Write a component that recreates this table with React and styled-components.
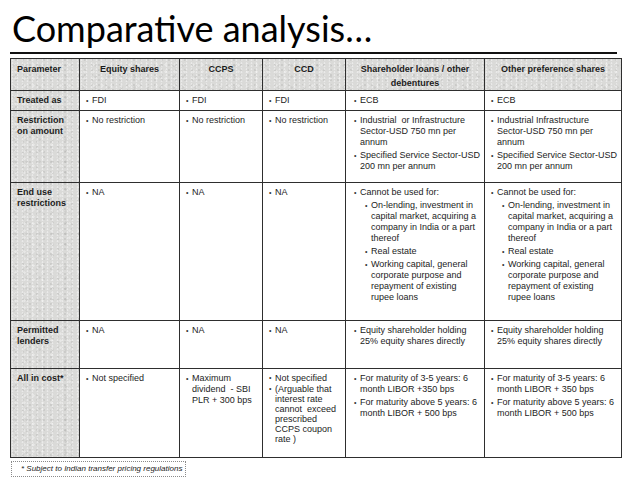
import React from 'react';
import styled, { createGlobalStyle, css } from 'styled-components';

const Global = createGlobalStyle`
  html, body { margin: 0; padding: 0; background: #fff; }
  body { font-family: "Liberation Sans", Arial, sans-serif; color: #1c1c1c; }
`;

const Page = styled.div`
  width: 638px;
  height: 479px;
  box-sizing: border-box;
  padding-left: 10px;
  background: #fff;
  overflow: hidden;
`;

const Title = styled.h1`
  margin: 0;
  width: 607px;
  height: 54px;
  box-sizing: border-box;
  border-bottom: 2px solid #111;
  padding: 10px 0 0 2px;
  font-family: Lato, "Open Sans", sans-serif;
  font-weight: 400;
  font-size: 36px;
  line-height: 36px;
  color: #000;
`;

const Grid = styled.div`
  margin-top: 4px;
  display: grid;
  grid-template-columns: 68px 99px 82px 82px 138px 136px;
  grid-template-rows: 31px 19px 71px 137px 47px 88px;
  gap: 1px;
  width: max-content;
  background: #2e2e2e;
  border: 1px solid #2e2e2e;
`;

const texture = css`
  background-color: #dadad8;
  background-image:
    radial-gradient(circle at 30% 40%, rgba(255, 255, 255, 0.45) 0.6px, transparent 1.2px),
    radial-gradient(circle at 70% 20%, rgba(0, 0, 0, 0.07) 0.7px, transparent 1.3px),
    radial-gradient(circle at 50% 80%, rgba(255, 255, 255, 0.35) 0.9px, transparent 1.5px),
    radial-gradient(circle at 20% 60%, rgba(0, 0, 0, 0.06) 0.9px, transparent 1.6px);
  background-size: 5px 3px, 7px 5px, 9px 7px, 13px 11px;
`;

const Cell = styled.div`
  box-sizing: border-box;
  padding: ${(p) => (p.$head ? '3px 6px 0' : `4px 4px 0 ${p.$pad ?? 6}px`)};
  font-size: 9px;
  line-height: ${(p) => (p.$head ? '14px' : `${p.$lh ?? 11}px`)};
  font-weight: ${(p) => (p.$bold ? 700 : 400)};
  text-align: ${(p) => (p.$center ? 'center' : 'left')};
  white-space: pre;
  background: #fff;
  color: #1c1c1c;
  ${(p) => p.$tex && texture}
`;

const List = styled.ul`
  margin: 0;
  padding: 0 0 0 ${(p) => (p.$nested ? '5px' : '0')};
  list-style: none;
  display: flex;
  flex-direction: column;
  gap: ${(p) => p.$gap ?? 2}px;
  margin-top: ${(p) => (p.$nested ? '2px' : '0')};
`;

const Item = styled.li`
  display: flex;
  align-items: flex-start;
`;

const Dot = styled.span`
  flex: 0 0 6px;
  font-size: 7px;
  line-height: inherit;
  color: #333;
`;

const Body = styled.div`
  white-space: pre;
`;

const Footnote = styled.div`
  margin-top: 3px;
  margin-left: 1px;
  width: 175px;
  box-sizing: border-box;
  border: 1px dotted #8a8a8a;
  padding: 2px 0 2px 9px;
  font-size: 8px;
  line-height: 10px;
  font-style: italic;
  color: #222;
  white-space: nowrap;
`;

const headers = [
  'Parameter',
  'Equity shares',
  'CCPS',
  'CCD',
  'Shareholder loans / other\ndebentures',
  'Other preference shares',
];

const padding = [6, 6, 6, 8, 6];

const endUse = [
  {
    text: 'Cannot be used for:',
    sub: [
      { text: 'On-lending, investment in\ncapital market, acquiring a\ncompany in India or a part\nthereof' },
      { text: 'Real estate' },
      { text: 'Working capital, general\ncorporate purpose and\nrepayment of existing\nrupee loans' },
    ],
  },
];

const rows = [
  {
    label: 'Treated as',
    cells: [[{ text: 'FDI' }], [{ text: 'FDI' }], [{ text: 'FDI' }], [{ text: 'ECB' }], [{ text: 'ECB' }]],
  },
  {
    label: 'Restriction\non amount',
    cells: [
      [{ text: 'No restriction' }],
      [{ text: 'No restriction' }],
      [{ text: 'No restriction' }],
      [
        { text: 'Industrial  or Infrastructure\nSector-USD 750 mn per\nannum' },
        { text: 'Specified Service Sector-USD\n200 mn per annum' },
      ],
      [
        { text: 'Industrial Infrastructure\nSector-USD 750 mn per\nannum' },
        { text: 'Specified Service Sector-USD\n200 mn per annum' },
      ],
    ],
  },
  {
    label: 'End use\nrestrictions',
    cells: [[{ text: 'NA' }], [{ text: 'NA' }], [{ text: 'NA' }], endUse, endUse],
  },
  {
    label: 'Permitted\nlenders',
    cells: [
      [{ text: 'NA' }],
      [{ text: 'NA' }],
      [{ text: 'NA' }],
      [{ text: 'Equity shareholder holding\n25% equity shares directly' }],
      [{ text: 'Equity shareholder holding\n25% equity shares directly' }],
    ],
  },
  {
    label: 'All in cost*',
    cells: [
      [{ text: 'Not specified' }],
      [{ text: 'Maximum\ndividend  - SBI\nPLR + 300 bps' }],
      { gap: 1, lh: 10, items: [{ text: 'Not specified' }, { text: '(Arguable that\ninterest rate\ncannot  exceed\nprescribed\nCCPS coupon\nrate )' }] },
      [
        { text: 'For maturity of 3-5 years: 6\nmonth LIBOR +350 bps' },
        { text: 'For maturity above 5 years: 6\nmonth LIBOR + 500 bps' },
      ],
      [
        { text: 'For maturity of 3-5 years: 6\nmonth LIBOR + 350 bps' },
        { text: 'For maturity above 5 years: 6\nmonth LIBOR + 500 bps' },
      ],
    ],
  },
];

function Bullets({ items, nested, gap }) {
  return (
    <List $nested={nested} $gap={gap}>
      {items.map((it, i) => (
        <Item key={i}>
          <Dot>•</Dot>
          <Body>
            {it.text}
            {it.sub && <Bullets items={it.sub} nested gap={2} />}
          </Body>
        </Item>
      ))}
    </List>
  );
}

export default function App() {
  return (
    <>
      <Global />
      <Page>
        <Title>Comparative analysis…</Title>
        <Grid>
          {headers.map((h, i) => (
            <Cell key={h} $head $bold $tex $center={i > 0}>
              {h}
            </Cell>
          ))}
          {rows.map((r) => (
            <React.Fragment key={r.label}>
              <Cell $bold $tex>
                {r.label}
              </Cell>
              {r.cells.map((c, j) => {
                const plain = Array.isArray(c);
                return (
                  <Cell key={j} $pad={padding[j]} $lh={plain ? 11 : c.lh}>
                    <Bullets items={plain ? c : c.items} gap={plain ? 2 : c.gap} />
                  </Cell>
                );
              })}
            </React.Fragment>
          ))}
        </Grid>
        <Footnote>* Subject to Indian transfer pricing regulations</Footnote>
      </Page>
    </>
  );
}
